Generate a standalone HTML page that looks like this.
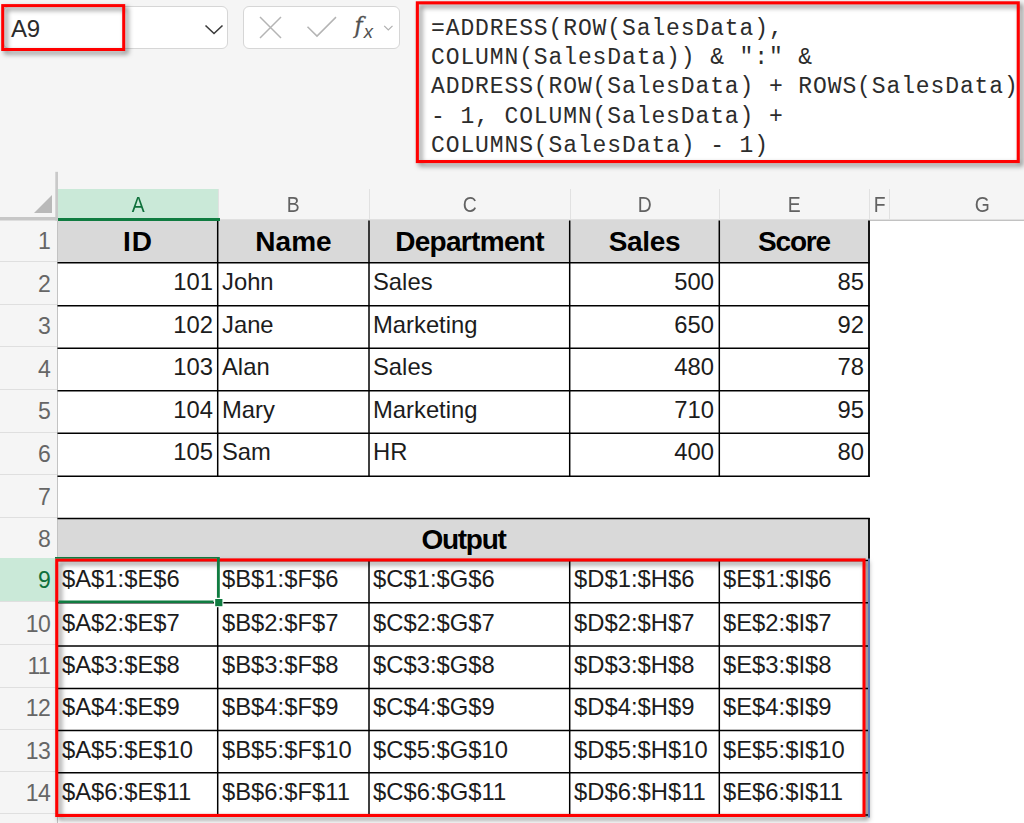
<!DOCTYPE html><html><head><meta charset="utf-8"><title>Excel ADDRESS formula</title><style>
*{margin:0;padding:0;box-sizing:border-box}
html,body{width:1024px;height:823px;overflow:hidden;background:#f5f5f5;font-family:"Liberation Sans",sans-serif;}
#root{position:relative;width:1024px;height:823px;overflow:hidden;background:#f5f5f5}
.abs{position:absolute}
.namebox{left:3px;top:6px;width:225px;height:43px;background:#fff;border:1px solid #d6d6d6;border-radius:6px}
.btnbox{left:243px;top:6px;width:157px;height:43px;background:#fff;border:1px solid #d6d6d6;border-radius:6px}
.a9{left:11px;top:15px;font-size:24px;line-height:28px;color:#2b2b2b;letter-spacing:-0.3px}
.formula{left:416px;top:2px;width:604px;height:161px;background:#fff}
.ftext{left:431px;top:15px;font-family:"Liberation Mono","DejaVu Sans Mono",monospace;font-size:23px;line-height:29.2px;color:#2c2c2c;white-space:pre;letter-spacing:0.89px}
.grid{left:58px;top:221px;width:966px;height:603px;background:#fff}
.colhdr{top:189px;height:30px;font-size:21.5px;line-height:32px;text-align:center;color:#626262}
.cl{display:inline-block;transform:scaleX(.9)}
.rowhdr{left:0;width:57px;text-align:right;padding-right:7px;font-size:23px;color:#666;letter-spacing:-0.7px}
.cell{font-size:23.8px;color:#1c1c1c;white-space:nowrap;overflow:hidden}
.hcell{font-weight:bold;font-size:28px;text-align:center;color:#000;}
</style></head><body><div id="root">
<div class="abs namebox"></div>
<div class="abs a9">A9</div>
<svg class="abs" style="left:204px;top:23px" width="20" height="14" viewBox="0 0 20 14"><path d="M1.5 2.5 L10 10.5 L18.5 2.5" fill="none" stroke="#3a3a3a" stroke-width="1.6"/></svg>
<svg class="abs" style="left:0px;top:0px;filter:drop-shadow(3.1px 3.1px 2.4px rgba(0,0,0,.5))" width="140" height="65" viewBox="0 0 140 65"><rect x="2.70" y="5.60" width="121.00" height="43.90" fill="none" stroke="#ff0000" stroke-width="3.00"/></svg>
<div class="abs btnbox"></div>
<svg class="abs" style="left:243px;top:6px" width="157" height="43" viewBox="0 0 157 43"><path d="M17 11 L38 32 M38 11 L17 32" stroke="#b4b4b4" stroke-width="1.5" fill="none"/><path d="M64.5 20.7 L74 30.1 L93 11.1" stroke="#b4b4b4" stroke-width="1.5" fill="none"/><path d="M141.2 19.8 L145.3 24 L149.5 19.8" stroke="#b0b0b0" stroke-width="1.2" fill="none"/><text x="111.6" y="26.9" font-family="DejaVu Serif,serif" font-style="italic" font-size="22" fill="#505050" stroke="#505050" stroke-width="0.3">f</text><text x="120.8" y="31.6" font-family="Liberation Sans,sans-serif" font-style="italic" font-size="18.5" fill="#505050">x</text></svg>
<div class="abs formula"></div>
<div class="abs ftext">=ADDRESS(ROW(SalesData),
COLUMN(SalesData)) &amp; &quot;:&quot; &amp;
ADDRESS(ROW(SalesData) + ROWS(SalesData)
- 1, COLUMN(SalesData) +
COLUMNS(SalesData) - 1)</div>
<svg class="abs" style="left:401px;top:0px;filter:drop-shadow(3.1px 3.1px 2.4px rgba(0,0,0,.5))" width="623" height="178" viewBox="401 0 623 178"><rect x="417.35" y="2.85" width="600.90" height="158.70" fill="none" stroke="#ff0000" stroke-width="3.10"/></svg>
<div class="abs grid"></div>
<div class="abs" style="left:57px;top:221px;width:1px;height:602px;background:#c3c3c3"></div>
<svg class="abs" style="left:0;top:160px" width="70" height="70" viewBox="0 160 70 70" fill="none"><path d="M56.65 171.8 V220.7" stroke="#c9c9c9" stroke-width="2.7"/><path d="M0 218.8 H58" stroke="#c7c7c7" stroke-width="3.6"/></svg>
<div class="abs" style="left:58px;top:219px;width:966px;height:1px;background:#e0e0e0"></div>
<div class="abs" style="left:58px;top:220px;width:966px;height:1px;background:#c2c2c2"></div>
<svg class="abs" style="left:33px;top:195px" width="20" height="19"><path d="M19 0 L19 18 L1 18 Z" fill="#b9b9b9"/></svg>
<div class="abs colhdr" style="left:58px;width:160px;background:#cae9d8;color:#0f703b;"><span class="cl">A</span></div>
<div class="abs colhdr" style="left:218px;width:151px;"><span class="cl">B</span></div>
<div class="abs" style="left:218px;top:189px;width:1px;height:30px;background:#e1e1e1"></div>
<div class="abs colhdr" style="left:369px;width:201px;"><span class="cl">C</span></div>
<div class="abs" style="left:369px;top:189px;width:1px;height:30px;background:#e1e1e1"></div>
<div class="abs colhdr" style="left:570px;width:149px;"><span class="cl">D</span></div>
<div class="abs" style="left:570px;top:189px;width:1px;height:30px;background:#e1e1e1"></div>
<div class="abs colhdr" style="left:719px;width:150px;"><span class="cl">E</span></div>
<div class="abs" style="left:719px;top:189px;width:1px;height:30px;background:#e1e1e1"></div>
<div class="abs colhdr" style="left:870px;width:20px"><span class="cl">F</span></div>
<div class="abs colhdr" style="left:889px;width:187px"><span class="cl">G</span></div>
<div class="abs" style="left:869px;top:189px;width:1px;height:30px;background:#e1e1e1"></div>
<div class="abs" style="left:889px;top:189px;width:1px;height:30px;background:#e1e1e1"></div>
<div class="abs rowhdr" style="top:220px;height:43px;line-height:42px;">1</div>
<div class="abs" style="left:0;top:261px;width:57px;height:1px;background:#dfdfdf"></div>
<div class="abs rowhdr" style="top:263px;height:43px;line-height:42px;">2</div>
<div class="abs" style="left:0;top:304px;width:57px;height:1px;background:#dfdfdf"></div>
<div class="abs rowhdr" style="top:306px;height:42px;line-height:41px;">3</div>
<div class="abs" style="left:0;top:346px;width:57px;height:1px;background:#dfdfdf"></div>
<div class="abs rowhdr" style="top:348px;height:43px;line-height:42px;">4</div>
<div class="abs" style="left:0;top:389px;width:57px;height:1px;background:#dfdfdf"></div>
<div class="abs rowhdr" style="top:391px;height:42px;line-height:41px;">5</div>
<div class="abs" style="left:0;top:432px;width:57px;height:1px;background:#dfdfdf"></div>
<div class="abs rowhdr" style="top:433px;height:43px;line-height:42px;">6</div>
<div class="abs" style="left:0;top:474px;width:57px;height:1px;background:#dfdfdf"></div>
<div class="abs rowhdr" style="top:476px;height:43px;line-height:42px;">7</div>
<div class="abs" style="left:0;top:517px;width:57px;height:1px;background:#dfdfdf"></div>
<div class="abs rowhdr" style="top:519px;height:41px;line-height:40px;">8</div>
<div class="abs rowhdr" style="top:558px;height:44px;line-height:45px;background:#cae9d8;color:#0f703b;">9</div>
<div class="abs" style="left:0;top:601px;width:57px;height:1px;background:#dfdfdf"></div>
<div class="abs rowhdr" style="top:603px;height:43px;line-height:42px;">10</div>
<div class="abs" style="left:0;top:644px;width:57px;height:1px;background:#dfdfdf"></div>
<div class="abs rowhdr" style="top:646px;height:42px;line-height:41px;">11</div>
<div class="abs" style="left:0;top:687px;width:57px;height:1px;background:#dfdfdf"></div>
<div class="abs rowhdr" style="top:688px;height:42px;line-height:41px;">12</div>
<div class="abs" style="left:0;top:729px;width:57px;height:1px;background:#dfdfdf"></div>
<div class="abs rowhdr" style="top:730px;height:43px;line-height:42px;">13</div>
<div class="abs" style="left:0;top:771px;width:57px;height:1px;background:#dfdfdf"></div>
<div class="abs rowhdr" style="top:773px;height:42px;line-height:41px;">14</div>
<div class="abs" style="left:0;top:813px;width:57px;height:1px;background:#dfdfdf"></div>
<div class="abs" style="left:58px;top:220px;width:812px;height:43px;background:#d9d9d9"></div>
<div class="abs" style="left:58px;top:518px;width:812px;height:43px;background:#d9d9d9"></div>
<div class="abs cell hcell" style="left:58px;top:220px;width:160px;height:42px;line-height:43px;letter-spacing:1.0px">ID</div>
<div class="abs cell hcell" style="left:218px;top:220px;width:151px;height:42px;line-height:43px;letter-spacing:0px">Name</div>
<div class="abs cell hcell" style="left:369px;top:220px;width:201px;height:42px;line-height:43px;letter-spacing:-0.7px">Department</div>
<div class="abs cell hcell" style="left:570px;top:220px;width:149px;height:42px;line-height:43px;letter-spacing:-0.3px">Sales</div>
<div class="abs cell hcell" style="left:719px;top:220px;width:150px;height:42px;line-height:43px;letter-spacing:-1.2px">Score</div>
<div class="abs cell" style="left:58px;top:267px;width:160px;height:30px;line-height:30px;text-align:right;padding-right:5px;">101</div>
<div class="abs cell" style="left:218px;top:267px;width:151px;height:30px;line-height:30px;text-align:left;padding-left:4px;">John</div>
<div class="abs cell" style="left:369px;top:267px;width:201px;height:30px;line-height:30px;text-align:left;padding-left:4px;">Sales</div>
<div class="abs cell" style="left:570px;top:267px;width:149px;height:30px;line-height:30px;text-align:right;padding-right:5px;">500</div>
<div class="abs cell" style="left:719px;top:267px;width:150px;height:30px;line-height:30px;text-align:right;padding-right:5px;">85</div>
<div class="abs cell" style="left:58px;top:310px;width:160px;height:30px;line-height:30px;text-align:right;padding-right:5px;">102</div>
<div class="abs cell" style="left:218px;top:310px;width:151px;height:30px;line-height:30px;text-align:left;padding-left:4px;">Jane</div>
<div class="abs cell" style="left:369px;top:310px;width:201px;height:30px;line-height:30px;text-align:left;padding-left:4px;">Marketing</div>
<div class="abs cell" style="left:570px;top:310px;width:149px;height:30px;line-height:30px;text-align:right;padding-right:5px;">650</div>
<div class="abs cell" style="left:719px;top:310px;width:150px;height:30px;line-height:30px;text-align:right;padding-right:5px;">92</div>
<div class="abs cell" style="left:58px;top:352px;width:160px;height:30px;line-height:30px;text-align:right;padding-right:5px;">103</div>
<div class="abs cell" style="left:218px;top:352px;width:151px;height:30px;line-height:30px;text-align:left;padding-left:4px;">Alan</div>
<div class="abs cell" style="left:369px;top:352px;width:201px;height:30px;line-height:30px;text-align:left;padding-left:4px;">Sales</div>
<div class="abs cell" style="left:570px;top:352px;width:149px;height:30px;line-height:30px;text-align:right;padding-right:5px;">480</div>
<div class="abs cell" style="left:719px;top:352px;width:150px;height:30px;line-height:30px;text-align:right;padding-right:5px;">78</div>
<div class="abs cell" style="left:58px;top:395px;width:160px;height:30px;line-height:30px;text-align:right;padding-right:5px;">104</div>
<div class="abs cell" style="left:218px;top:395px;width:151px;height:30px;line-height:30px;text-align:left;padding-left:4px;">Mary</div>
<div class="abs cell" style="left:369px;top:395px;width:201px;height:30px;line-height:30px;text-align:left;padding-left:4px;">Marketing</div>
<div class="abs cell" style="left:570px;top:395px;width:149px;height:30px;line-height:30px;text-align:right;padding-right:5px;">710</div>
<div class="abs cell" style="left:719px;top:395px;width:150px;height:30px;line-height:30px;text-align:right;padding-right:5px;">95</div>
<div class="abs cell" style="left:58px;top:437px;width:160px;height:30px;line-height:30px;text-align:right;padding-right:5px;">105</div>
<div class="abs cell" style="left:218px;top:437px;width:151px;height:30px;line-height:30px;text-align:left;padding-left:4px;">Sam</div>
<div class="abs cell" style="left:369px;top:437px;width:201px;height:30px;line-height:30px;text-align:left;padding-left:4px;">HR</div>
<div class="abs cell" style="left:570px;top:437px;width:149px;height:30px;line-height:30px;text-align:right;padding-right:5px;">400</div>
<div class="abs cell" style="left:719px;top:437px;width:150px;height:30px;line-height:30px;text-align:right;padding-right:5px;">80</div>
<div class="abs cell hcell" style="left:58px;top:518px;width:811px;height:42px;line-height:43px;letter-spacing:-1.28px">Output</div>
<div class="abs cell" style="left:58px;top:564px;width:160px;height:30px;line-height:30px;padding-left:4px">$A$1:$E$6</div>
<div class="abs cell" style="left:218px;top:564px;width:151px;height:30px;line-height:30px;padding-left:4px">$B$1:$F$6</div>
<div class="abs cell" style="left:369px;top:564px;width:201px;height:30px;line-height:30px;padding-left:4px">$C$1:$G$6</div>
<div class="abs cell" style="left:570px;top:564px;width:149px;height:30px;line-height:30px;padding-left:4px">$D$1:$H$6</div>
<div class="abs cell" style="left:719px;top:564px;width:150px;height:30px;line-height:30px;padding-left:4px">$E$1:$I$6</div>
<div class="abs cell" style="left:58px;top:608px;width:160px;height:30px;line-height:30px;padding-left:4px">$A$2:$E$7</div>
<div class="abs cell" style="left:218px;top:608px;width:151px;height:30px;line-height:30px;padding-left:4px">$B$2:$F$7</div>
<div class="abs cell" style="left:369px;top:608px;width:201px;height:30px;line-height:30px;padding-left:4px">$C$2:$G$7</div>
<div class="abs cell" style="left:570px;top:608px;width:149px;height:30px;line-height:30px;padding-left:4px">$D$2:$H$7</div>
<div class="abs cell" style="left:719px;top:608px;width:150px;height:30px;line-height:30px;padding-left:4px">$E$2:$I$7</div>
<div class="abs cell" style="left:58px;top:650px;width:160px;height:30px;line-height:30px;padding-left:4px">$A$3:$E$8</div>
<div class="abs cell" style="left:218px;top:650px;width:151px;height:30px;line-height:30px;padding-left:4px">$B$3:$F$8</div>
<div class="abs cell" style="left:369px;top:650px;width:201px;height:30px;line-height:30px;padding-left:4px">$C$3:$G$8</div>
<div class="abs cell" style="left:570px;top:650px;width:149px;height:30px;line-height:30px;padding-left:4px">$D$3:$H$8</div>
<div class="abs cell" style="left:719px;top:650px;width:150px;height:30px;line-height:30px;padding-left:4px">$E$3:$I$8</div>
<div class="abs cell" style="left:58px;top:692px;width:160px;height:30px;line-height:30px;padding-left:4px">$A$4:$E$9</div>
<div class="abs cell" style="left:218px;top:692px;width:151px;height:30px;line-height:30px;padding-left:4px">$B$4:$F$9</div>
<div class="abs cell" style="left:369px;top:692px;width:201px;height:30px;line-height:30px;padding-left:4px">$C$4:$G$9</div>
<div class="abs cell" style="left:570px;top:692px;width:149px;height:30px;line-height:30px;padding-left:4px">$D$4:$H$9</div>
<div class="abs cell" style="left:719px;top:692px;width:150px;height:30px;line-height:30px;padding-left:4px">$E$4:$I$9</div>
<div class="abs cell" style="left:58px;top:735px;width:160px;height:30px;line-height:30px;padding-left:4px">$A$5:$E$10</div>
<div class="abs cell" style="left:218px;top:735px;width:151px;height:30px;line-height:30px;padding-left:4px">$B$5:$F$10</div>
<div class="abs cell" style="left:369px;top:735px;width:201px;height:30px;line-height:30px;padding-left:4px">$C$5:$G$10</div>
<div class="abs cell" style="left:570px;top:735px;width:149px;height:30px;line-height:30px;padding-left:4px">$D$5:$H$10</div>
<div class="abs cell" style="left:719px;top:735px;width:150px;height:30px;line-height:30px;padding-left:4px">$E$5:$I$10</div>
<div class="abs cell" style="left:58px;top:777px;width:160px;height:30px;line-height:30px;padding-left:4px">$A$6:$E$11</div>
<div class="abs cell" style="left:218px;top:777px;width:151px;height:30px;line-height:30px;padding-left:4px">$B$6:$F$11</div>
<div class="abs cell" style="left:369px;top:777px;width:201px;height:30px;line-height:30px;padding-left:4px">$C$6:$G$11</div>
<div class="abs cell" style="left:570px;top:777px;width:149px;height:30px;line-height:30px;padding-left:4px">$D$6:$H$11</div>
<div class="abs cell" style="left:719px;top:777px;width:150px;height:30px;line-height:30px;padding-left:4px">$E$6:$I$11</div>
<svg class="abs" style="left:0;top:0" width="1024" height="823" viewBox="0 0 1024 823" fill="none"><path d="M57.50 262.80 H869.70" stroke="#000" stroke-width="1.50"/><path d="M57.50 305.80 H869.70" stroke="#000" stroke-width="1.50"/><path d="M57.50 348.30 H869.70" stroke="#000" stroke-width="1.50"/><path d="M57.50 390.70 H869.70" stroke="#000" stroke-width="1.50"/><path d="M57.50 433.30 H869.70" stroke="#000" stroke-width="1.50"/><path d="M57.50 476.20 H869.70" stroke="#000" stroke-width="1.50"/><path d="M57.50 518.60 H869.70" stroke="#000" stroke-width="1.50"/><path d="M57.50 560.40 H869.70" stroke="#000" stroke-width="1.50"/><path d="M57.50 602.80 H869.70" stroke="#000" stroke-width="1.50"/><path d="M57.50 646.10 H869.70" stroke="#000" stroke-width="1.50"/><path d="M57.50 688.40 H869.70" stroke="#000" stroke-width="1.50"/><path d="M57.50 730.50 H869.70" stroke="#000" stroke-width="1.50"/><path d="M57.50 772.80 H869.70" stroke="#000" stroke-width="1.50"/><path d="M57.50 815.00 H869.70" stroke="#000" stroke-width="1.50"/><path d="M217.70 220.50 V476.20" stroke="#000" stroke-width="1.50"/><path d="M217.70 560.40 V815.00" stroke="#000" stroke-width="1.50"/><path d="M369.00 220.50 V476.20" stroke="#000" stroke-width="1.50"/><path d="M369.00 560.40 V815.00" stroke="#000" stroke-width="1.50"/><path d="M569.70 220.50 V476.20" stroke="#000" stroke-width="1.50"/><path d="M569.70 560.40 V815.00" stroke="#000" stroke-width="1.50"/><path d="M719.30 220.50 V476.20" stroke="#000" stroke-width="1.50"/><path d="M719.30 560.40 V815.00" stroke="#000" stroke-width="1.50"/><path d="M869.00 220.50 V476.90" stroke="#000" stroke-width="1.80"/><path d="M869.00 517.90 V560.40" stroke="#000" stroke-width="1.80"/></svg>
<svg class="abs" style="left:41px;top:544px;filter:drop-shadow(3.1px 3.1px 2.4px rgba(0,0,0,.5))" width="839" height="279" viewBox="41 544 839 279"><rect x="56.75" y="559.95" width="807.30" height="255.50" fill="none" stroke="#ff0000" stroke-width="3.10"/></svg>
<svg class="abs" style="left:860px;top:550px" width="20" height="273" viewBox="860 550 20 273" fill="none"><path d="M866.9 561.5 V817.3" stroke="#000" stroke-opacity="0.21" stroke-width="2.4"/><path d="M869.0 558.6 V817.6" stroke="#5b7aba" stroke-width="2"/></svg>
<svg class="abs" style="left:0;top:0" width="1024" height="823" viewBox="0 0 1024 823" fill="none"><path d="M58 219.4 H220" stroke="#107c41" stroke-width="3"/><path d="M55 557.7 H219" stroke="#107c41" stroke-width="1.6"/><path d="M218.4 557 V598" stroke="#107c41" stroke-width="2.8"/><path d="M58.5 601.7 H213.5" stroke="#107c41" stroke-width="2.6"/><rect x="214" y="597.8" width="9.4" height="9.4" fill="#fff"/><rect x="215.2" y="599" width="7.2" height="7.2" fill="#107c41"/></svg>
</div></body></html>
